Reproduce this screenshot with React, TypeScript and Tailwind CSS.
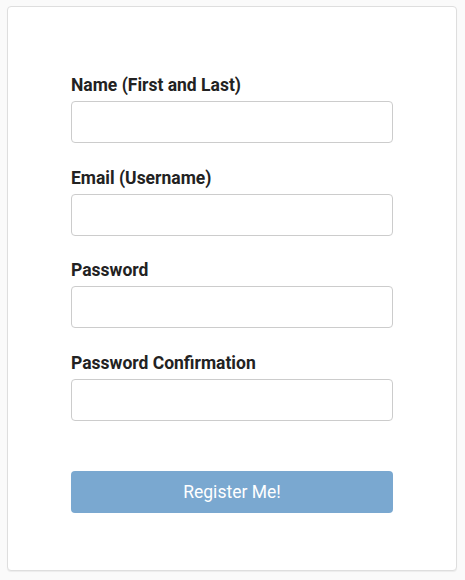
export default function App() {
  const fields = [
    { label: 'Name (First and Last)', type: 'text' },
    { label: 'Email (Username)', type: 'email' },
    { label: 'Password', type: 'password' },
    { label: 'Password Confirmation', type: 'password' },
  ]

  return (
    <div className="min-h-screen bg-[#fafafa] pt-[6px] pl-[7px]" style={{ fontFamily: 'Roboto, "Noto Sans", sans-serif' }}>
      <form
        className="w-[450px] h-[565px] bg-white border border-[#dedede] rounded-[4px] shadow-[0_1px_1px_rgba(0,0,0,0.06)] pt-[65px] pl-[63px]"
        onSubmit={(e) => e.preventDefault()}
      >
        {fields.map((f) => (
          <div key={f.label} className="mb-[21.7px]">
            <label className="block text-[17.5px] leading-[26px] font-bold text-[#222] mb-[3px]">{f.label}</label>
            <input
              type={f.type}
              className="block w-[322px] h-[42px] border border-[#cccccc] rounded-[4px] bg-white px-3 outline-none"
            />
          </div>
        ))}
        <button
          type="submit"
          className="mt-[28px] w-[322px] h-[42px] rounded-[4px] bg-[#7aa8d0] text-white text-[17.5px] leading-[24px]"
        >
          Register Me!
        </button>
      </form>
    </div>
  )
}
